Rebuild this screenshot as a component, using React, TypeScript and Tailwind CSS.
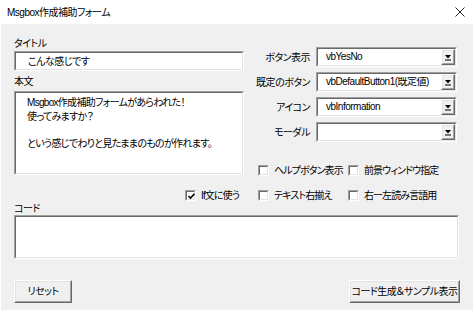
import React from "react";

const font = "font-['Liberation_Sans','Noto_Sans_CJK_JP',sans-serif]";

function Sunken({ className = "", children }: { className?: string; children?: React.ReactNode }) {
  return (
    <div className={`border border-t-[#a0a0a0] border-l-[#a0a0a0] border-b-white border-r-white ${className}`}>
      <div className="w-full h-full border border-t-[#696969] border-l-[#696969] border-b-[#e3e3e3] border-r-[#e3e3e3] bg-white">
        {children}
      </div>
    </div>
  );
}

function Raised({ className = "", children }: { className?: string; children?: React.ReactNode }) {
  return (
    <div className={`border border-t-white border-l-white border-b-[#696969] border-r-[#696969] ${className}`}>
      <div className="w-full h-full border border-t-[#e3e3e3] border-l-[#e3e3e3] border-b-[#a0a0a0] border-r-[#a0a0a0] bg-[#f0f0f0] flex items-center justify-center whitespace-nowrap">
        {children}
      </div>
    </div>
  );
}

function Combo({ value }: { value: string }) {
  return (
    <Sunken className="w-[141px] h-[20px]">
      <div className="flex h-full items-center">
        <div className="flex-1 pl-[8px] leading-none whitespace-nowrap overflow-hidden">{value}</div>
        <Raised className="w-[14px] h-full">
          <svg width="8" height="8" viewBox="0 0 8 8">
            <polygon points="1,2 7,2 4,5.5" fill="#000" />
            <rect x="1" y="6.5" width="6" height="1" fill="#000" />
          </svg>
        </Raised>
      </div>
    </Sunken>
  );
}

function Check({ label, checked = false, className = "" }: { label: string; checked?: boolean; className?: string }) {
  return (
    <div className={`flex items-center h-[13px] ${className}`}>
      <Sunken className="w-[11px] h-[11px] shrink-0">
        {checked && (
          <svg width="9" height="9" viewBox="0 0 9 9" className="block">
            <path d="M1.5 4 L3.5 6 L7.5 1.8" stroke="#000" strokeWidth="1.6" fill="none" />
          </svg>
        )}
      </Sunken>
      <span className="ml-[5px] leading-none whitespace-nowrap tracking-[-0.9px]">{label}</span>
    </div>
  );
}

export default function App() {
  return (
    <div className={`w-[474px] h-[317px] bg-white flex flex-col text-[10px] tracking-[-0.5px] text-black ${font} [font-feature-settings:'palt']`}>
      <div className="h-[24px] flex items-center justify-between pl-[7px] pr-[9px] shrink-0">
        <span>Msgbox作成補助フォーム</span>
        <svg width="10" height="10" viewBox="0 0 10 10">
          <path d="M0.5 0.5 L9.5 9.5 M9.5 0.5 L0.5 9.5" stroke="#222" strokeWidth="1" />
        </svg>
      </div>
      <div className="mx-[1px] h-[286px] bg-[#f0f0f0] flex flex-col pl-[13px] shrink-0">
        <div className="flex">
          <div className="w-[230px] flex flex-col pt-[13px]">
            <div className="h-[14px] leading-[14px]">タイトル</div>
            <Sunken className="w-[230px] h-[20px]">
              <div className="pl-[12px] leading-[17px]">こんな感じです</div>
            </Sunken>
            <div className="h-[14px] leading-[14px] mt-[4px]">本文</div>
            <Sunken className="w-[230px] h-[84px] mt-[2px]">
              <div className="pl-[11px] pt-[3px] leading-[13.5px] tracking-[-0.7px]">
                <div>Msgbox作成補助フォームがあらわれた！</div>
                <div>使ってみますか？</div>
                <div>&nbsp;</div>
                <div>という感じでわりと見たままのものが作れます。</div>
              </div>
            </Sunken>
          </div>
          <div className="flex flex-col pt-[23px]">
            {[
              ["ボタン表示", "vbYesNo"],
              ["既定のボタン", "vbDefaultButton1(既定値)"],
              ["アイコン", "vbInformation"],
              ["モーダル", ""],
            ].map(([l, v], i) => (
              <div key={i} className={`flex items-center ${i > 0 ? "mt-[5px]" : ""}`}>
                <div className="w-[66px] text-right whitespace-nowrap">{l}</div>
                <div className="ml-[6px]">
                  <Combo value={v} />
                </div>
              </div>
            ))}
            <div className="flex mt-[22px] ml-[14px]">
              <Check label="ヘルプボタン表示" className="w-[90px]" />
              <Check label="前景ウィンドウ指定" />
            </div>
          </div>
        </div>
        <div className="flex mt-[12px] ml-[171px]">
          <Check label="If文に使う" checked className="w-[73px]" />
          <Check label="テキスト右揃え" className="w-[90px]" />
          <Check label="右ー左読み言語用" />
        </div>
        <div className="h-[13px] leading-[13px]">コード</div>
        <Sunken className="w-[445px] h-[44px]" />
        <div className="flex justify-between mt-[21px] w-[446px]">
          <Raised className="w-[58px] h-[23px]">リセット</Raised>
          <Raised className="w-[111px] h-[23px]">コード生成＆サンプル表示</Raised>
        </div>
      </div>
    </div>
  );
}
